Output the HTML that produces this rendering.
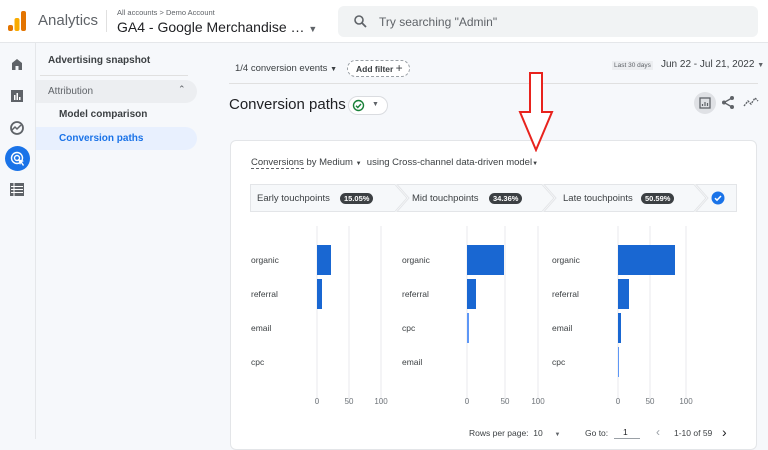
<!DOCTYPE html><html><head><style>
*{margin:0;padding:0;box-sizing:border-box}
body{width:768px;height:439px;overflow:hidden;background:#f6f8fb;font-family:"Liberation Sans",Arial,sans-serif;color:#202124;position:relative}
.a{position:absolute}
</style></head><body>
<div class="a" style="left:0;top:0;width:768px;height:43px;background:#fff;border-bottom:1px solid #e5e7ea"></div>
<svg class="a" style="left:8px;top:11px" width="18" height="22"><rect x="0" y="14" width="5" height="6" rx="2" fill="#e37400"/><rect x="6.5" y="7" width="5" height="13" rx="2" fill="#f9ab00"/><rect x="13" y="0" width="5" height="20" rx="2" fill="#e37400"/></svg>
<div class="a" style="left:38px;top:12px;font-size:15px;color:#5f6368">Analytics</div>
<div class="a" style="left:106px;top:10px;width:1px;height:22px;background:#e0e0e0"></div>
<div class="a" style="left:117px;top:8px;font-size:7.5px;color:#5f6368">All accounts &gt; Demo Account</div>
<div class="a" style="left:117px;top:19px;font-size:14px;color:#202124">GA4 - Google Merchandise … <span style="font-size:9px;color:#5f6368">▼</span></div>
<div class="a" style="left:338px;top:6px;width:420px;height:31px;background:#f1f3f4;border-radius:6px"></div>
<svg class="a" style="left:354px;top:15px" width="13" height="13"><circle cx="5" cy="5" r="4" fill="none" stroke="#5f6368" stroke-width="1.6"/><line x1="8" y1="8" x2="12" y2="12" stroke="#5f6368" stroke-width="1.8"/></svg>
<div class="a" style="left:379px;top:15px;font-size:12px;color:#5f6368">Try searching "Admin"</div>
<div class="a" style="left:35px;top:43px;width:1px;height:396px;background:#e5e7ea"></div>
<svg class="a" style="left:10px;top:57px" width="14" height="14"><path d="M2 13V6L7 2l5 4v7H8.5V9h-3v4z" fill="#5f6368"/></svg>
<svg class="a" style="left:10px;top:89px" width="14" height="14"><rect x="1" y="1" width="12" height="12" fill="#5f6368"/><rect x="4" y="6" width="1.5" height="5" fill="#fff"/><rect x="6.5" y="4" width="1.5" height="7" fill="#fff"/><rect x="9" y="8" width="1.5" height="3" fill="#fff"/></svg>
<svg class="a" style="left:9px;top:120px" width="16" height="16"><circle cx="8" cy="8" r="6" fill="none" stroke="#5f6368" stroke-width="1.8"/><path d="M3 10l3-3 2 2 4-4" stroke="#5f6368" stroke-width="1.5" fill="none"/></svg>
<div class="a" style="left:5px;top:146px;width:25px;height:25px;border-radius:50%;background:#1a73e8"></div>
<svg class="a" style="left:9px;top:150px" width="17" height="17"><circle cx="8" cy="8" r="5.5" fill="none" stroke="#fff" stroke-width="1.4"/><circle cx="8" cy="8" r="2.5" fill="none" stroke="#fff" stroke-width="1.4"/><path d="M9 9l6 2-2 1 2 3-1 1-2-3-1 2z" fill="#fff"/></svg>
<svg class="a" style="left:10px;top:183px" width="14" height="13"><rect x="0" y="0" width="14" height="13" fill="#5f6368"/><path d="M1 3.5h12M1 6.5h12M1 9.5h12M4 0v13" stroke="#fff" stroke-width="1"/></svg>
<div class="a" style="left:48px;top:55px;font-size:10px;font-weight:bold;color:#3c4043">Advertising snapshot</div>
<div class="a" style="left:40px;top:75px;width:148px;height:1px;background:#e0e0e0"></div>
<div class="a" style="left:36px;top:80px;width:161px;height:23px;background:#eceef1;border-radius:0 12px 12px 0"></div>
<div class="a" style="left:48px;top:86px;font-size:10px;color:#5f6368">Attribution</div>
<div class="a" style="left:178px;top:84px;font-size:9px;color:#5f6368">⌃</div>
<div class="a" style="left:59px;top:109px;font-size:10px;font-weight:bold;color:#3c4043">Model comparison</div>
<div class="a" style="left:36px;top:127px;width:161px;height:23px;background:#e8f0fe;border-radius:0 12px 12px 0"></div>
<div class="a" style="left:59px;top:133px;font-size:10px;font-weight:bold;color:#1a73e8">Conversion paths</div>
<div class="a" style="left:235px;top:63px;font-size:9.5px;color:#3c4043">1/4 conversion events <span style="font-size:7px">▼</span></div>
<div class="a" style="left:347px;top:60px;width:63px;height:17px;border:1px dashed #9aa0a6;border-radius:9px;font-size:8.5px;font-weight:bold;color:#3c4043;padding:3px 0 0 8px;background:#fff">Add filter <span style="font-size:12px;font-weight:normal;line-height:8px">+</span></div>
<div class="a" style="left:612px;top:61px;font-size:6.5px;color:#5f6368;background:#eceef1;padding:1px 2px">Last 30 days</div>
<div class="a" style="left:661px;top:59px;font-size:10px;color:#3c4043">Jun 22 - Jul 21, 2022 <span style="font-size:7px;color:#5f6368">▼</span></div>
<div class="a" style="left:229px;top:83px;width:529px;height:1px;background:#e0e0e0"></div>
<div class="a" style="left:229px;top:96px;font-size:15px;color:#202124">Conversion paths</div>
<div class="a" style="left:348px;top:96px;width:40px;height:19px;border:1px solid #dadce0;border-radius:10px;background:#fff"></div>
<svg class="a" style="left:352px;top:99px" width="13" height="13"><circle cx="6.5" cy="6.5" r="5" fill="none" stroke="#188038" stroke-width="1.4"/><path d="M4 6.7l1.8 1.8L9 5" stroke="#188038" stroke-width="1.4" fill="none"/></svg>
<div class="a" style="left:372px;top:101px;font-size:7px;color:#5f6368">▼</div>
<div class="a" style="left:694px;top:92px;width:22px;height:22px;border-radius:50%;background:#dfe1e5"></div>
<svg class="a" style="left:699px;top:97px" width="12" height="12"><rect x="1" y="1" width="10" height="10" fill="none" stroke="#5f6368" stroke-width="1.3"/><path d="M3.5 9V7M6 9V5M8.5 9V6" stroke="#5f6368" stroke-width="1.2"/></svg>
<svg class="a" style="left:721px;top:95px" width="14" height="15"><circle cx="11" cy="3" r="2" fill="#5f6368"/><circle cx="3" cy="7.5" r="2" fill="#5f6368"/><circle cx="11" cy="12" r="2" fill="#5f6368"/><path d="M11 3L3 7.5 11 12" stroke="#5f6368" stroke-width="1.3" fill="none"/></svg>
<svg class="a" style="left:743px;top:96px" width="16" height="12"><path d="M1 10l4-5 3 3 4-6 3 3" stroke="#5f6368" stroke-width="1.4" fill="none" stroke-dasharray="2 1"/></svg>
<div class="a" style="left:230px;top:140px;width:527px;height:310px;background:#fff;border:1px solid #e3e5e8;border-radius:6px"></div>
<div class="a" style="left:251px;top:157px;font-size:9.5px;color:#3c4043"><span style="border-bottom:1px dashed #5f6368">Conversions</span> by Medium <span style="font-size:6px">▼</span>&nbsp; using Cross-channel data-driven model<span style="font-size:6px">▼</span></div>
<svg class="a" style="left:250px;top:184px" width="487" height="28">
<g fill="#f6f8fa" stroke="#e3e5e8" stroke-width="1">
<path d="M0.5 0.5H145l12 13.5-12 13.5H0.5z"/>
<path d="M147 0.5H292l12 13.5-12 13.5H147l12-13.5z"/>
<path d="M294 0.5H444l12 13.5-12 13.5H294l12-13.5z"/>
<path d="M446 0.5H486.5V27.5H446l12-13.5z"/>
</g></svg>
<div class="a" style="left:257px;top:193px;font-size:9.5px;color:#3c4043">Early touchpoints</div>
<div class="a" style="left:340px;top:193px;font-size:7.5px;font-weight:bold;color:#fff;background:#3c4043;border-radius:6px;padding:1px 4px">15.05%</div>
<div class="a" style="left:412px;top:193px;font-size:9.5px;color:#3c4043">Mid touchpoints</div>
<div class="a" style="left:489px;top:193px;font-size:7.5px;font-weight:bold;color:#fff;background:#3c4043;border-radius:6px;padding:1px 4px">34.36%</div>
<div class="a" style="left:563px;top:193px;font-size:9.5px;color:#3c4043">Late touchpoints</div>
<div class="a" style="left:641px;top:193px;font-size:7.5px;font-weight:bold;color:#fff;background:#3c4043;border-radius:6px;padding:1px 4px">50.59%</div>
<svg class="a" style="left:711px;top:191px" width="14" height="14"><circle cx="7" cy="7" r="6.5" fill="#1a73e8"/><path d="M4 7.2l2 2L10 5" stroke="#fff" stroke-width="1.5" fill="none"/></svg>
<svg class="a" style="left:230px;top:212px" width="527" height="200" font-family="Liberation Sans,Arial" font-size="8.5" fill="#3c4043">
<g stroke="#e8eaed" stroke-width="1">
<path d="M87 14V192M119 14V192M151 14V192M237 14V192M275 14V192M308 14V192M388 14V192M420 14V192M456 14V192"/>
</g>
<g fill="#1967d2">
<rect x="87" y="33" width="14" height="30"/><rect x="87" y="67" width="5" height="30"/>
<rect x="237" y="33" width="37" height="30"/><rect x="237" y="67" width="9" height="30"/><rect x="237" y="101" width="2" height="30" fill="#5e97f6"/>
<rect x="388" y="33" width="57" height="30"/><rect x="388" y="67" width="11" height="30"/><rect x="388" y="101" width="3" height="30"/><rect x="388" y="135" width="1" height="30" fill="#5e97f6"/>
</g>
<text x="21" y="51">organic</text><text x="21" y="85">referral</text><text x="21" y="119">email</text><text x="21" y="153">cpc</text>
<text x="172" y="51">organic</text><text x="172" y="85">referral</text><text x="172" y="119">cpc</text><text x="172" y="153">email</text>
<text x="322" y="51">organic</text><text x="322" y="85">referral</text><text x="322" y="119">email</text><text x="322" y="153">cpc</text>
<g font-size="8" fill="#70757a" text-anchor="middle">
<text x="87" y="192">0</text><text x="119" y="192">50</text><text x="151" y="192">100</text>
<text x="237" y="192">0</text><text x="275" y="192">50</text><text x="308" y="192">100</text>
<text x="388" y="192">0</text><text x="420" y="192">50</text><text x="456" y="192">100</text>
</g>
<line x1="20" y1="208" x2="520" y2="208" stroke="#e0e0e0"/>
</svg>
<div class="a" style="left:469px;top:428px;font-size:8.5px;color:#3c4043">Rows per page:&nbsp; 10 &nbsp;&nbsp;&nbsp;&nbsp;<span style="font-size:6px;color:#5f6368">▼</span></div>
<div class="a" style="left:585px;top:428px;font-size:8.5px;color:#3c4043">Go to:</div>
<div class="a" style="left:614px;top:427px;width:26px;height:12px;border-bottom:1px solid #9aa0a6;font-size:8.5px;padding-left:9px">1</div>
<div class="a" style="left:656px;top:425px;font-size:12px;color:#9aa0a6">‹</div>
<div class="a" style="left:674px;top:428px;font-size:8.5px;color:#3c4043">1-10 of 59</div>
<div class="a" style="left:722px;top:424px;font-size:14px;color:#202124">›</div>
<svg class="a" style="left:518px;top:72px" width="36" height="80"><path d="M12 1H24V40H34L18 78 2 40H12z" fill="#fff" stroke="#e8231d" stroke-width="2"/></svg>
</body></html>
